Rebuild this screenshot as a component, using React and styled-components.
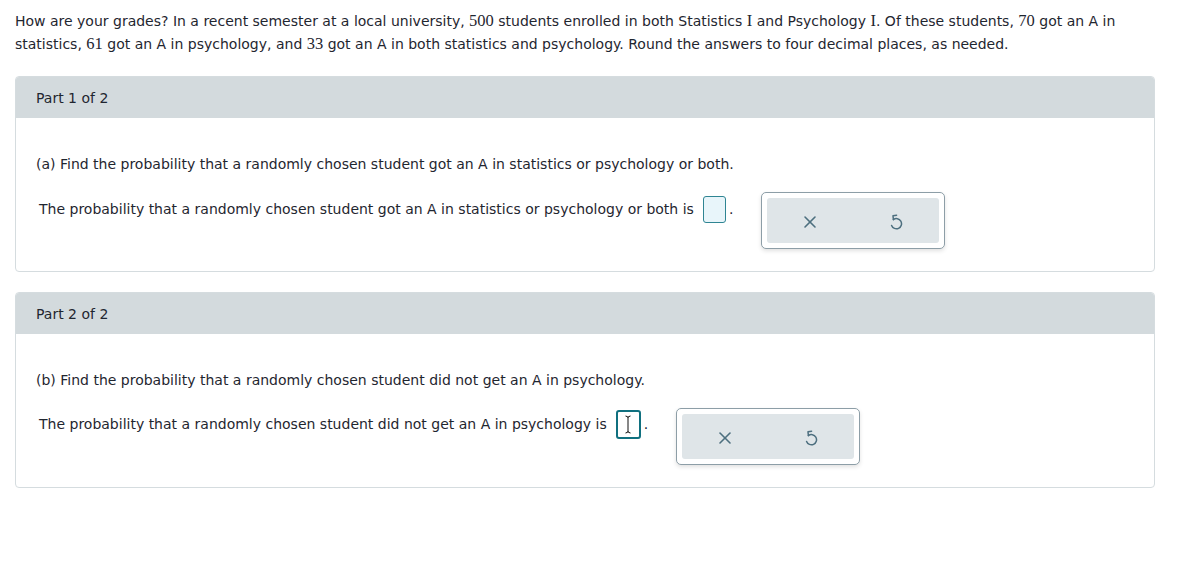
import React from 'react';
import styled, { createGlobalStyle } from 'styled-components';

const GlobalStyle = createGlobalStyle`
  html, body {
    margin: 0;
    padding: 0;
    background: #ffffff;
  }
  body {
    font-family: "DejaVu Sans", Verdana, sans-serif;
    color: #1f2630;
  }
`

const Page = styled.div`
  padding: 10px 25px 20px 15px;
`

const Intro = styled.p`
  margin: 0 0 20px 0;
  font-size: 14px;
  line-height: 23px;
  white-space: nowrap;
`

const Num = styled.span`
  font-family: "Liberation Serif", "Times New Roman", serif;
  font-size: 16.5px;
  line-height: 1;
`

const Panel = styled.section`
  border: 1px solid #d5dcdf;
  border-radius: 4px;
  margin-bottom: 20px;
  overflow: hidden;
`

const PanelHeader = styled.div`
  height: 41px;
  display: flex;
  align-items: center;
  padding-left: 20px;
  background: #d3dadd;
  font-size: 14px;
`

const PanelBody = styled.div`
  padding: 36px 20px 22px 20px;
`

const Question = styled.div`
  font-size: 14px;
  line-height: 20px;
  margin-bottom: 18px;
`

const AnswerRow = styled.div`
  display: flex;
  align-items: flex-start;
  padding-left: 3px;
`

const AnswerLine = styled.div`
  display: flex;
  align-items: center;
  height: 28px;
  margin-top: ${p => p.$offset}px;
  font-size: 14px;
`

const InputBox = styled.span`
  display: inline-flex;
  align-items: center;
  justify-content: center;
  box-sizing: border-box;
  width: ${p => (p.$focused ? 25 : 23)}px;
  height: ${p => (p.$focused ? 29 : 27)}px;
  margin-left: 9px;
  border: ${p => (p.$focused ? '2px solid #10707f' : '1px solid #2f8593')};
  border-radius: 3px;
  background: ${p => (p.$focused ? '#ffffff' : '#e8f5fa')};
`

const Dot = styled.span`
  margin-left: 3px;
`

const Tools = styled.div`
  margin-left: 28px;
  box-sizing: border-box;
  width: 184px;
  height: 57px;
  padding: 5px;
  border: 1px solid #8d9ea7;
  border-radius: 5px;
  background: #ffffff;
  box-shadow: 0 2px 4px rgba(0, 0, 0, 0.12);
`

const ToolsInner = styled.div`
  height: 100%;
  display: flex;
  align-items: center;
  justify-content: space-around;
  border-radius: 3px;
  background: #dfe5e8;
`

const ToolButton = styled.span`
  display: inline-flex;
  width: 40px;
  justify-content: center;
  align-items: center;
  color: #4d6f7f;
  margin-top: 2px;
`

const ClearIcon = () => (
  <svg width="14" height="14" viewBox="0 0 14 14" fill="none" stroke="currentColor" strokeWidth="1.6" strokeLinecap="round">
    <line x1="2" y1="2" x2="12" y2="12" />
    <line x1="12" y1="2" x2="2" y2="12" />
  </svg>
)

const UndoIcon = () => (
  <svg width="16" height="17" viewBox="0 0 16 17" fill="none" stroke="currentColor" strokeWidth="1.5" strokeLinecap="round" strokeLinejoin="round">
    <polyline points="8.6,2.2 5,2.8 5.4,6.6" />
    <path d="M5.4 6.6 A5.1 5.1 0 1 1 3.6 12.4" />
  </svg>
)

const Caret = () => (
  <svg width="8" height="19" viewBox="0 0 8 19" fill="none" stroke="#111" strokeWidth="1">
    <line x1="4" y1="1.5" x2="4" y2="17.5" />
    <path d="M1.5 1 Q4 1.5 4 2.5 Q4 1.5 6.5 1" />
    <path d="M1.5 18 Q4 17.5 4 16.5 Q4 17.5 6.5 18" />
  </svg>
)

const Part = ({ label, question, answer, focused, offset }) => (
  <Panel>
    <PanelHeader>{label}</PanelHeader>
    <PanelBody>
      <Question>{question}</Question>
      <AnswerRow>
        <AnswerLine $offset={offset}>
          {answer}
          <InputBox $focused={focused}>{focused && <Caret />}</InputBox>
          <Dot>.</Dot>
        </AnswerLine>
        <Tools>
          <ToolsInner>
            <ToolButton><ClearIcon /></ToolButton>
            <ToolButton><UndoIcon /></ToolButton>
          </ToolsInner>
        </Tools>
      </AnswerRow>
    </PanelBody>
  </Panel>
)

const App = () => (
  <Page>
    <GlobalStyle />
    <Intro>
      How are your grades? In a recent semester at a local university, <Num>500</Num> students enrolled in both
      Statistics <Num>I</Num> and Psychology <Num>I</Num>. Of these students, <Num>70</Num> got an A in
      <br />
      statistics, <Num>61</Num> got an A in psychology, and <Num>33</Num> got an A in both statistics and psychology.
      Round the answers to four decimal places, as needed.
    </Intro>
    <Part
      label="Part 1 of 2"
      question="(a) Find the probability that a randomly chosen student got an A in statistics or psychology or both."
      answer="The probability that a randomly chosen student got an A in statistics or psychology or both is"
      offset={3}
    />
    <Part
      label="Part 2 of 2"
      question="(b) Find the probability that a randomly chosen student did not get an A in psychology."
      answer="The probability that a randomly chosen student did not get an A in psychology is"
      focused
      offset={2}
    />
  </Page>
)

export default App
